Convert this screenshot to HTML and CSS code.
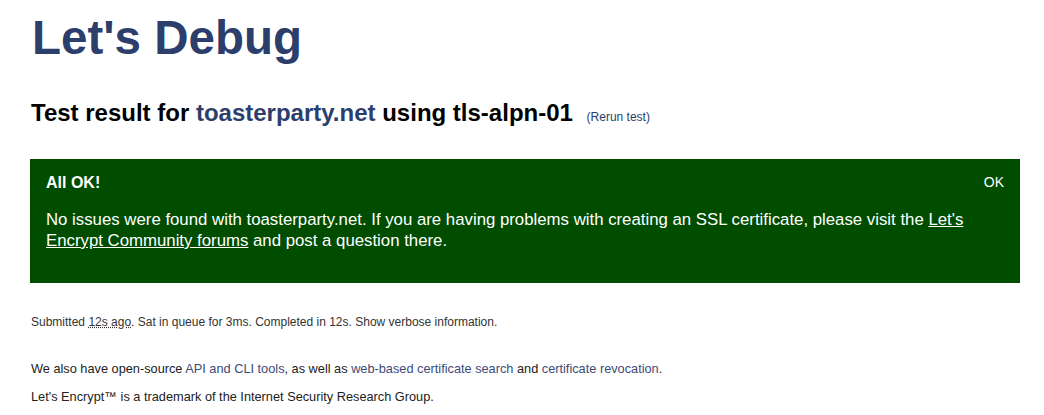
FILE: index.html
```html
<!DOCTYPE html>
<html lang="en">
<head>
<meta charset="UTF-8">
<meta name="viewport" content="width=device-width, initial-scale=1.0">
<title>Let's Debug</title>
<link rel="stylesheet" href="styles.css">
</head>
<body>

<div class="container">
    <h1>Let's Debug</h1>

    <h2>Test result for <a href="#">toasterparty.net</a> using tls-alpn-01 <a class="rerun" href="#">(Rerun test)</a></h2>

    <div class="resultado">
        <div class="resultado-topo">
            <strong>All OK!</strong>
            <span>OK</span>
        </div>
        <p>No issues were found with toasterparty.net. If you are having problems with creating an SSL certificate, please visit the <a href="#">Let's Encrypt Community forums</a> and post a question there.</p>
    </div>

    <p class="info">Submitted <abbr title="12 seconds ago">12s ago</abbr>. Sat in queue for 3ms. Completed in 12s. <a class="verbose" href="#">Show verbose information.</a></p>

    <div class="rodape">
        <p>We also have open-source <a href="#">API and CLI tools</a>, as well as <a href="#">web-based certificate search</a> and <a href="#">certificate revocation</a>.</p>
        <p>Let's Encrypt&trade; is a trademark of the Internet Security Research Group.</p>
    </div>
</div>

</body>
</html>
```

FILE: styles.css
```css
body { font-family: "Liberation Sans", Arial, sans-serif; margin: 0; color: #000; }
a { color: #2c3e6b; text-decoration: none; }
.container { max-width: 990px; margin-left: 30px; }
h1 { font-size: 47.5px; color: #2c3e6b; margin: 10px 0 0 2px; }
h2 { font-size: 24px; margin: 34px 0 0 1px; }
h2 .rerun { font-size: 12px; font-weight: normal; margin-left: 7px; }
.resultado { background-color: #004d00; color: white; padding: 15px 16px 16px 16px; margin-top: 32px; }
.resultado-topo { display: flex; justify-content: space-between; font-size: 16px; }
.resultado-topo span { font-size: 14px; }
.resultado p { font-size: 16.8px; margin: 17px 0 16px 0; line-height: 21px; }
.resultado a { color: white; text-decoration: underline; }
.info { font-size: 12px; color: #333; margin: 32px 0 0 1px; }
.info abbr { text-decoration: underline dotted; }
.info .verbose { color: #333; }
.rodape { margin-top: 32px; font-size: 12.75px; color: #222; }
.rodape p { margin: 0 0 13px 1px; }
.rodape a { color: #3c4b78; }
```
